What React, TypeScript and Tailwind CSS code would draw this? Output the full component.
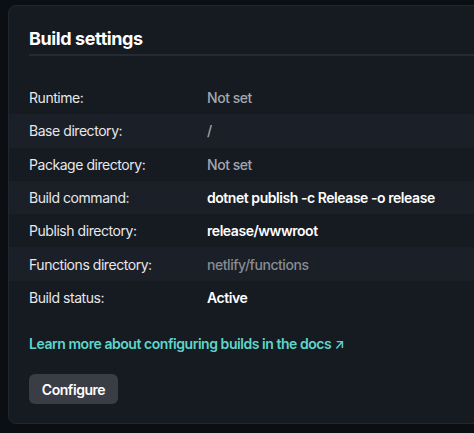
const rows: { label: string; value: string; tone: 'muted' | 'strong' | 'dim' }[] = [
  { label: 'Runtime:', value: 'Not set', tone: 'muted' },
  { label: 'Base directory:', value: '/', tone: 'muted' },
  { label: 'Package directory:', value: 'Not set', tone: 'muted' },
  { label: 'Build command:', value: 'dotnet publish -c Release -o release', tone: 'strong' },
  { label: 'Publish directory:', value: 'release/wwwroot', tone: 'strong' },
  { label: 'Functions directory:', value: 'netlify/functions', tone: 'dim' },
  { label: 'Build status:', value: 'Active', tone: 'strong' }
];

const toneClass = {
  muted: 'font-medium text-[#a3a7ae]',
  strong: 'font-semibold text-white',
  dim: 'font-medium text-[#878c94]'
};

export default function App() {
  return (
    <div className="h-[433px] w-[474px] overflow-hidden bg-[#0b0e13] pl-[8px] pt-[5px] font-['Inter',sans-serif]">
      <section className="h-[419px] w-[480px] rounded-l-lg border border-[#22262e] bg-[#161a21]">
        <div className="pl-[20px] pt-[20px]">
          <h2 className="text-[18px] font-bold leading-[26px] tracking-[-0.4px] text-white">Build settings</h2>
          <div className="mt-[2px] h-[2px] bg-[#262a31]" />
        </div>

        <dl className="mt-[25px] tracking-[-0.45px]">
          {rows.map((row, idx) => (
            <div
              key={row.label}
              className={`flex h-[33.3px] items-center pl-[20px] text-[14px] ${idx % 2 === 1 ? 'bg-[#1b1f27]' : ''}`}
            >
              <dt className="w-[178px] text-[#e6e8eb]">{row.label}</dt>
              <dd className={toneClass[row.tone]}>{row.value}</dd>
            </div>
          ))}
        </dl>

        <div className="pl-[20px] tracking-[-0.45px]">
          <a href="#" className="mt-[20px] block text-[14px] font-semibold leading-[20px] text-[#5ed6cb]">
            Learn more about configuring builds in the docs <span className="text-[13px]">↗</span>
          </a>
          <button className="mt-[20px] h-[30px] w-[89px] rounded-md bg-[#3a3d45] text-[14px] font-semibold text-white">
            Configure
          </button>
        </div>
      </section>
    </div>
  );
}
